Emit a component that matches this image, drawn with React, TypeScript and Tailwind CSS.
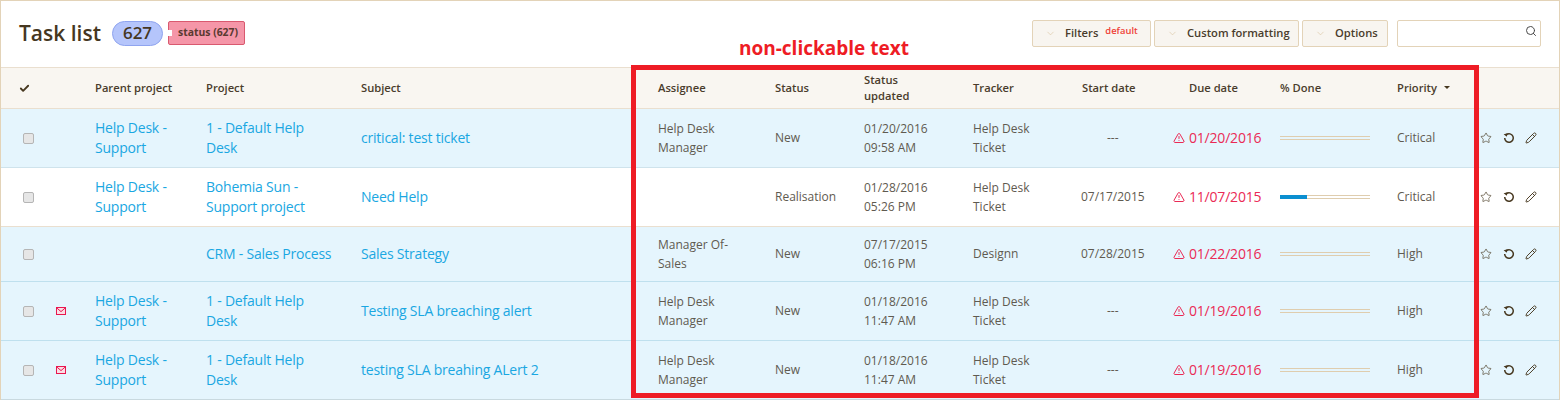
import { Check, ChevronDown, Search, Star, Pencil, TriangleAlert } from "lucide-react";

const cols = "grid grid-cols-[46px_48px_111px_155px_297px_117px_89px_109px_108px_93px_106px_117px_83px_79px]";

type Row = {
  h: string; bg: string; border: string; mail?: boolean; parent: string[]; project: string[]; subject: string;
  assignee: string[]; status: string; updated: string[]; tracker: string[]; start: string; due: string; done: number; priority: string;
};

const rows: Row[] = [
  { h: "h-[59px]", bg: "bg-[#e5f5fd]", border: "border-[#cfe3ec]", parent: ["Help Desk -", "Support"], project: ["1 - Default Help", "Desk"], subject: "critical: test ticket", assignee: ["Help Desk", "Manager"], status: "New", updated: ["01/20/2016", "09:58 AM"], tracker: ["Help Desk", "Ticket"], start: "---", due: "01/20/2016", done: 0, priority: "Critical" },
  { h: "h-[59px]", bg: "bg-white", border: "border-[#eadfcf]", parent: ["Help Desk -", "Support"], project: ["Bohemia Sun -", "Support project"], subject: "Need Help", assignee: [], status: "Realisation", updated: ["01/28/2016", "05:26 PM"], tracker: ["Help Desk", "Ticket"], start: "07/17/2015", due: "11/07/2015", done: 30, priority: "Critical" },
  { h: "h-[55px]", bg: "bg-[#e5f5fd]", border: "border-[#bfe0ee]", parent: [], project: ["CRM - Sales Process"], subject: "Sales Strategy", assignee: ["Manager Of-", "Sales"], status: "New", updated: ["07/17/2015", "06:16 PM"], tracker: ["Designn"], start: "07/28/2015", due: "01/22/2016", done: 0, priority: "High" },
  { h: "h-[59px]", bg: "bg-[#e5f5fd]", border: "border-[#bfe0ee]", mail: true, parent: ["Help Desk -", "Support"], project: ["1 - Default Help", "Desk"], subject: "Testing SLA breaching alert", assignee: ["Help Desk", "Manager"], status: "New", updated: ["01/18/2016", "11:47 AM"], tracker: ["Help Desk", "Ticket"], start: "---", due: "01/19/2016", done: 0, priority: "High" },
  { h: "h-[59px]", bg: "bg-[#e5f5fd]", border: "border-[#c9d9df]", mail: true, parent: ["Help Desk -", "Support"], project: ["1 - Default Help", "Desk"], subject: "testing SLA breahing ALert 2", assignee: ["Help Desk", "Manager"], status: "New", updated: ["01/18/2016", "11:47 AM"], tracker: ["Help Desk", "Ticket"], start: "---", due: "01/19/2016", done: 0, priority: "High" },
];

function Lines({ lines, className }: { lines: string[]; className: string }) {
  return (
    <div className={className}>
      {lines.map((l) => (
        <div key={l}>{l}</div>
      ))}
    </div>
  );
}

function MailIcon() {
  return (
    <svg width="10" height="8" viewBox="0 0 10 8" className="block">
      <rect x="0.5" y="0.5" width="9" height="7" fill="#fbdde4" stroke="#e8174f" />
      <path d="M0.8 1 L5 4.6 L9.2 1" fill="none" stroke="#e8174f" strokeWidth="1" />
    </svg>
  );
}

function RefreshIcon() {
  return (
    <svg width="12" height="12" viewBox="0 0 12 12" className="ml-[11px] shrink-0">
      <path d="M3.4 2.6 A4.3 4.3 0 1 1 1.7 6" fill="none" stroke="currentColor" strokeWidth="1.5" />
      <path d="M0.6 2.2 L4.6 1.2 L3.8 4.8 Z" fill="currentColor" />
    </svg>
  );
}

function ToolButton({ label, extra, wide }: { label: string; extra?: string; wide: string }) {
  return (
    <div className={`${wide} h-[27px] flex items-center bg-[#f8f5f0] border border-[#e3d3b8] rounded-[2px] pl-[12px]`}>
      <ChevronDown size={11} strokeWidth={1.4} className="text-[#d9c5a3] shrink-0" />
      <span className="ml-[9px] text-[11.2px] font-semibold text-[#4a3c2c] whitespace-nowrap">{label}</span>
      {extra && <span className="ml-[7px] -mt-[5px] text-[9.4px] font-semibold text-[#ef4136]">{extra}</span>}
    </div>
  );
}

export default function App() {
  const head = "text-[11.2px] font-semibold text-[#4a3c2c] leading-[16px]";
  const body = "text-[12px] text-[#5f5a50] leading-[19px]";
  const single = "text-[12px] text-[#5f5a50] leading-[18px]";
  const link = "text-[14px] tracking-[-0.22px] text-[#1aa7e2] leading-[20px]";
  return (
    <div className="relative w-[1560px] h-[400px] overflow-hidden bg-white border-l border-t border-r border-[#e3d3b8] font-['Open_Sans',sans-serif]">
      <div className="h-[66px] flex items-start justify-between">
        <div className="flex items-center pl-[18px] pt-[19px]">
          <span className="text-[21px] font-semibold text-[#46371f] leading-[26px]">Task list</span>
          <span className="ml-[11px] w-[51px] h-[25px] rounded-full bg-[#b5c5fb] border border-[#8fa4ef] flex items-center justify-center text-[17px] font-semibold text-[#46371f]">627</span>
          <span className="relative ml-[5px] w-[77px] h-[24px] rounded-[2px] bg-[#f596a8] border border-[#d9596f] flex items-center pl-[9px] text-[10.4px] font-bold text-[#5a3a30] whitespace-nowrap">
            <span className="absolute -left-px top-[8px] w-[4px] h-[6px] bg-white" />
            status (627)
          </span>
        </div>
        <div className="flex items-center pt-[19px] pr-[18px]">
          <ToolButton label="Filters" extra="default" wide="w-[119px]" />
          <div className="w-[3px]" />
          <ToolButton label="Custom formatting" wide="w-[145px]" />
          <div className="w-[3px]" />
          <ToolButton label="Options" wide="w-[86px]" />
          <div className="ml-[9px] w-[144px] h-[27px] bg-white border border-[#e3d3b8] rounded-[2px] flex items-start justify-end pr-[3px] pt-[4px]">
            <Search size={12} strokeWidth={2} className="text-[#4a4a4a]" />
          </div>
        </div>
      </div>

      <div className={`${cols} h-[42px] items-center bg-[#f9f6f1] border-t border-b border-[#eadfcf]`}>
        <div className="pl-[18px]"><Check size={11} strokeWidth={4} className="text-[#46371f]" /></div>
        <div />
        <div className={head}>Parent project</div>
        <div className={head}>Project</div>
        <div className={head}>Subject</div>
        <div className={head}>Assignee</div>
        <div className={head}>Status</div>
        <div className={head}>Status<br />updated</div>
        <div className={head}>Tracker</div>
        <div className={`${head} pl-px`}>Start date</div>
        <div className={`${head} pl-[15px]`}>Due date</div>
        <div className={head}>% Done</div>
        <div className={`${head} flex items-center gap-[7px]`}>
          Priority
          <span className="w-0 h-0 border-l-[3px] border-r-[3px] border-t-[3px] border-l-transparent border-r-transparent border-t-[#46371f] -mt-[2px]" />
        </div>
        <div />
      </div>

      {rows.map((r) => (
        <div key={r.subject} className={`${cols} ${r.h} ${r.bg} ${r.border} border-b items-center`}>
          <div className="pl-[22px]">
            <div className="w-[11px] h-[11px] rounded-[2px] bg-[#e6e6e6] border border-[#b5b5b5]" />
          </div>
          <div className="pl-[9px]">
            {r.mail && <MailIcon />}
          </div>
          <Lines lines={r.parent} className={link} />
          <Lines lines={r.project} className={link} />
          <div className={link}>{r.subject}</div>
          <Lines lines={r.assignee} className={body} />
          <div className={single}>{r.status}</div>
          <Lines lines={r.updated} className={body} />
          <Lines lines={r.tracker} className={r.tracker.length === 1 ? single : body} />
          <div className={r.start === "---" ? `${single} pl-[26px]` : single}>{r.start}</div>
          <div className="flex items-center text-[14px] tracking-[-0.2px] leading-[18px] text-[#ea2a55]">
            <TriangleAlert size={12} strokeWidth={2} className="mr-[4px] -ml-px" />
            {r.due}
          </div>
          <div className="w-[90px] h-[4px] border-t border-b border-[#dfcdae]">
            <div className="h-[2px] bg-[#0b8fd0] box-content -mt-px border-t border-b border-[#0b8fd0]" style={{ width: `${r.done}%`, display: r.done ? "block" : "none" }} />
          </div>
          <div className={single}>{r.priority}</div>
          <div className="flex items-center text-[#46371f] -mt-px">
            <Star size={12} strokeWidth={1.3} />
            <RefreshIcon />
            <Pencil size={12} strokeWidth={1.9} className="ml-[10px]" />
          </div>
        </div>
      ))}

      <div className="absolute left-[630px] top-[64px] w-[848px] h-[333px] border-[5px] border-[#ee1c25]" />
      <div className="absolute left-[738px] top-[35px] text-[19px] leading-[24px] font-bold text-[#ee1c25] whitespace-nowrap">non-clickable text</div>
    </div>
  );
}
